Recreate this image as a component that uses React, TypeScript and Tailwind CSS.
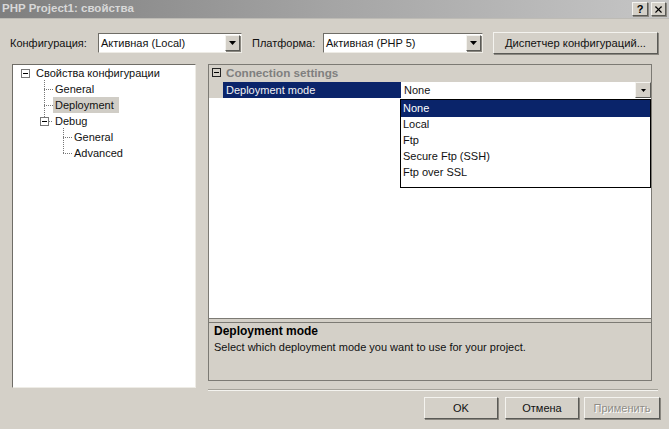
import { X } from "lucide-react";

const raised =
  "border border-t-[#f4f3ef] border-l-[#f4f3ef] border-r-[#5a5a56] border-b-[#5a5a56] bg-[#d4d0c8] shadow-[1px_1px_0_#8a8780]";
const sunken =
  "border border-t-[#6f6d67] border-l-[#6f6d67] border-r-[#eeece6] border-b-[#eeece6] bg-white";

function Arrow({ small }: { small?: boolean }) {
  return (
    <svg width={small ? 5 : 7} height={small ? 3 : 4} viewBox="0 0 7 4">
      <path d="M0 0h7L3.5 4z" fill="#000" />
    </svg>
  );
}

function Combo({ value, width }: { value: string; width: string }) {
  return (
    <div className={`${sunken} ${width} h-[20px] flex items-center justify-between pl-[2px] pr-[1px]`}>
      <span className="text-[#111]">{value}</span>
      <div className={`${raised} w-[15px] h-[16px] flex items-center justify-center`}>
        <Arrow />
      </div>
    </div>
  );
}

function MinusBox({ size = 9 }: { size?: number }) {
  return (
    <svg width={size} height={size} viewBox="0 0 9 9" className="shrink-0">
      <rect x="0.5" y="0.5" width="8" height="8" fill="#fff" stroke="#777" />
      <path d="M2 4.5h5" stroke="#000" />
    </svg>
  );
}

// один ряд дерева, линии рисуются поверх
function TreeRow({
  label,
  indent,
  selected,
}: {
  label: string;
  indent: string;
  selected?: boolean;
}) {
  return (
    <div className={`h-[16px] flex items-center ${indent}`}>
      <div className="w-[9px] border-t border-dotted border-[#777]" />
      <span className={`pl-[2px] h-[16px] leading-[16px] text-[#111] ${selected ? "bg-[#d0cdc6] pr-[5px]" : "pr-[2px]"}`}>
        {label}
      </span>
    </div>
  );
}

function Tree() {
  return (
    <div className={`${sunken} relative w-[184px] h-[324px]`}>
      <div className="absolute left-[31px] top-[15px] h-[37px] border-l border-dotted border-[#777]" />
      <div className="absolute left-[50px] top-[63px] h-[25px] border-l border-dotted border-[#777]" />
      <div className="h-[16px] flex items-center pl-[8px] gap-[6px]">
        <MinusBox />
        <span className="text-[#111]">Свойства конфигурации</span>
      </div>
      <TreeRow label="General" indent="pl-[31px]" />
      <TreeRow label="Deployment" indent="pl-[31px]" selected />
      <div className="h-[16px] flex items-center pl-[27px]">
        <MinusBox />
        <div className="w-[3px] border-t border-dotted border-[#777]" />
        <span className="pl-[3px] text-[#111]">Debug</span>
      </div>
      <TreeRow label="General" indent="pl-[50px]" />
      <TreeRow label="Advanced" indent="pl-[50px]" />
    </div>
  );
}

function PropertyGrid() {
  return (
    <div className="relative w-[444px] h-[317px] border border-[#7c7a74] flex flex-col">
      <div className="h-[17px] flex items-center pl-[3px] pb-[2px] gap-[5px]">
        <svg width="9" height="9" viewBox="0 0 9 9" className="shrink-0">
          <rect x="0.5" y="0.5" width="8" height="8" fill="none" stroke="#222" />
          <path d="M2 4.5h5" stroke="#000" />
        </svg>
        <span className="font-bold text-[11.7px] text-[#7f7f7f]">Connection settings</span>
      </div>
      <div className="flex-1 flex flex-col bg-white">
        <div className="h-[16px] flex bg-[#d4d0c8]">
          <div className="w-[14px]" />
          <div className="w-[178px] bg-[#0a246a] text-[#f2f2f2] pl-[3px] leading-[16px]">Deployment mode</div>
          <div className="flex-1 bg-white flex items-center justify-between pl-[3px]">
            <span className="text-[#111]">None</span>
            <div className={`${raised} w-[16px] h-[16px] flex items-center justify-center`}>
              <Arrow small />
            </div>
          </div>
        </div>
        <div className="flex-1 bg-white" />
      </div>
      {/* выпадающий список */}
      <div className="absolute left-[191px] top-[34px] w-[251px] h-[89px] bg-white border border-black">
        <div className="h-[17px] leading-[17px] pl-[2px] bg-[#0a246a] text-white">None</div>
        <div className="mt-[-1px]">
          {["Local", "Ftp", "Secure Ftp (SSH)", "Ftp over SSL"].map((item) => (
            <div key={item} className="h-[16px] leading-[16px] pl-[2px] text-[#111]">
              {item}
            </div>
          ))}
        </div>
      </div>
      <div className="h-[4px] border-t border-[#7c7a74] bg-[#d4d0c8]" />
      <div className="h-[58px] border-t border-[#7c7a74] bg-[#d4d0c8] px-[5px]">
        <div className="font-bold text-[12px] text-black h-[16px] leading-[16px]">Deployment mode</div>
        <div className="text-[#111] h-[16px] leading-[16px]">Select which deployment mode you want to use for your project.</div>
      </div>
    </div>
  );
}

export default function App() {
  return (
    <div className="w-[669px] h-[429px] overflow-hidden bg-[#d4d0c8] flex flex-col font-['Liberation_Sans',Arial,sans-serif] text-[11px]">
      {/* заголовок */}
      <div className="h-[19px] shrink-0 flex items-center justify-between pl-[2px] pr-[3px] bg-gradient-to-r from-[#7f7f7f] via-[#a5a5a5] to-[#c6c6c6] border-b-[1px] border-[#bdbbb5]">
        <span className="font-bold text-[11.5px] text-[#d8d8d8]">PHP Project1: свойства</span>
        <div className="flex gap-[3px]">
          <div className={`${raised} w-[16px] h-[14px] flex items-center justify-center font-bold text-[11px] leading-none text-black`}>?</div>
          <div className={`${raised} w-[15px] h-[14px] flex items-center justify-center`}>
            <X size={11} strokeWidth={2.5} color="#000" />
          </div>
        </div>
      </div>

      <div className="flex items-center h-[22px] mt-[13px] pl-[10px]">
        <span className="w-[88px] text-[#111]">Конфигурация:</span>
        <Combo value="Активная (Local)" width="w-[144px]" />
        <span className="ml-[10px] w-[71px] text-[#111]">Платформа:</span>
        <Combo value="Активная (PHP 5)" width="w-[160px]" />
        <div className={`${raised} ml-[10px] w-[165px] h-[22px] flex items-center justify-center text-[#111] text-[11.2px]`}>
          Диспетчер конфигураций...
        </div>
      </div>

      <div className="flex items-start mt-[10px] pl-[12px] gap-[12px]">
        <Tree />
        <PropertyGrid />
      </div>

      <div className="ml-[208px] w-[450px] mt-[-1px] h-[2px] bg-[#f4f3ef] border-t border-[#a5a29a] translate-y-[2px]" />

      <div className="flex justify-end pr-[9px] mt-[8px]">
        <div className={`${raised} w-[74px] h-[22px] flex items-center justify-center text-[#111]`}>OK</div>
        <div className={`${raised} ml-[7px] w-[74px] h-[22px] flex items-center justify-center text-[#111]`}>Отмена</div>
        <div className={`${raised} ml-[5px] w-[76px] h-[22px] flex items-center justify-center text-[#8f8d87] [text-shadow:1px_1px_0_#fff]`}>Применить</div>
      </div>
    </div>
  );
}
